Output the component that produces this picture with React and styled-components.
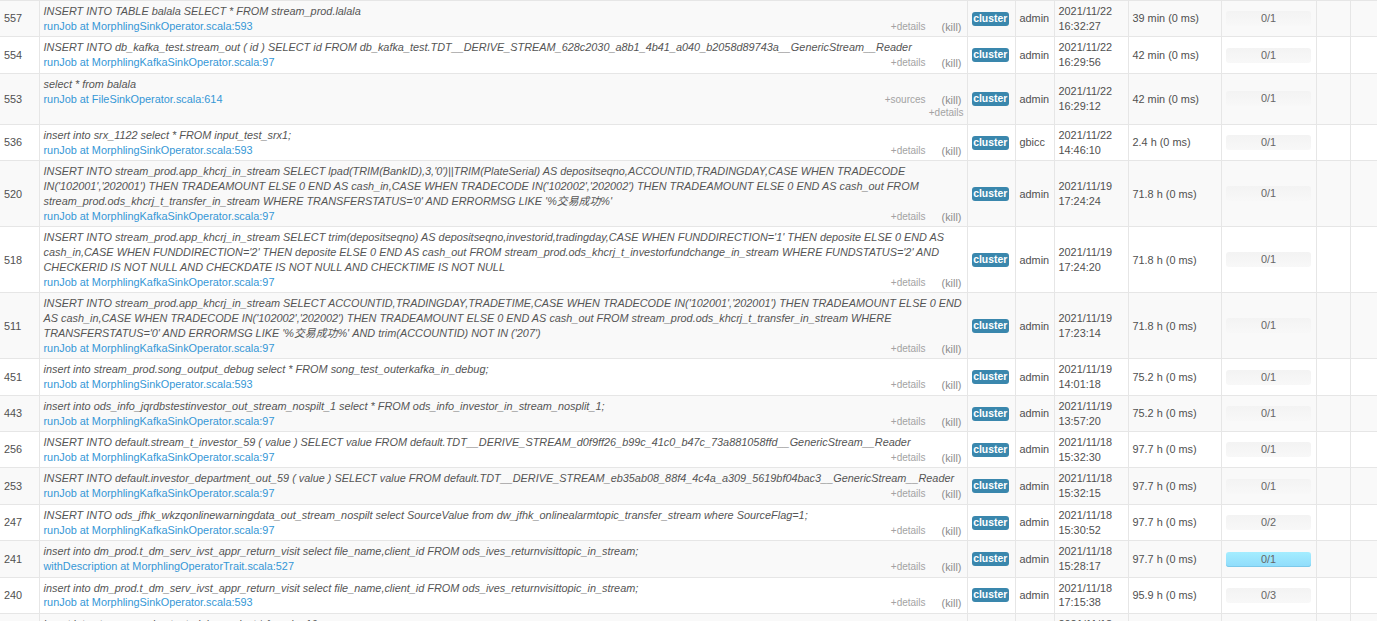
import styled, { createGlobalStyle } from "styled-components";

const GlobalStyle = createGlobalStyle`
	html, body {
		height: 100%;
		margin: 0;
		overflow: hidden;
		background-color: #fff;
	}
	body {
		font-family: "Liberation Sans", "Noto Sans CJK SC", sans-serif;
		font-size: 10.88px;
		line-height: 14.8px;
		color: #505050;
	}
`;

const Table = styled.table`
	width: 1377px;
	table-layout: fixed;
	border-collapse: collapse;
`;

const Row = styled.tr`
	background-color: ${(props) => (props.$striped ? "#f9f9f9" : "#fff")};
`;

const Cell = styled.td`
	padding: 3px 4px 2.8px;
	border-top: 1px solid #e6e6e6;
	border-left: 1px solid #e6e6e6;
	vertical-align: middle;
	&:first-child {
		border-left: none;
	}
`;

const DescCell = styled(Cell)`
	vertical-align: top;
`;

const Query = styled.div`
	font-style: italic;
	color: #555;
`;

const Foot = styled.div`
	display: flex;
	align-items: baseline;
	height: 14.8px;
`;

const JobLink = styled.a`
	color: #3597d6;
	text-decoration: none;
`;

const Expand = styled.span`
	margin-left: auto;
	margin-right: 16px;
	font-size: 10px;
	color: #a3a3a3;
`;

const Kill = styled.span`
	color: #8d8d8d;
	position: relative;
	top: 1px;
	margin-right: 1px;
`;

const ExtraLine = styled.div`
	text-align: right;
	font-size: 10px;
	color: #a3a3a3;
	margin-right: -1px;
`;

const Badge = styled.span`
	display: block;
	width: 36.5px;
	height: 14px;
	margin-left: 0.5px;
	line-height: 14px;
	text-align: center;
	border-radius: 3px;
	background-color: #3a87ad;
	color: #fff;
	font-size: 10.4px;
	font-weight: 700;
`;

const Stamp = styled.span`
	display: block;
	width: 60px;
`;

const Progress = styled.div`
	height: 15px;
	line-height: 15px;
	margin: 0 0.5px;
	text-align: center;
	border-radius: 3px;
	color: #666;
	background: ${(props) =>
		props.$active
			? "linear-gradient(to bottom, #a4edff, #8fdcfb)"
			: "linear-gradient(to bottom, #f3f3f3, #f8f8f8)"};
	box-shadow: ${(props) => (props.$active ? "inset 0 -1px 0 #7cc9ea" : "none")};
`;

const columns = [39, 928, 48, 39, 74, 93, 95, 34, 27];

const sink593 = "runJob at MorphlingSinkOperator.scala:593";
const kafka97 = "runJob at MorphlingKafkaSinkOperator.scala:97";

const jobs = [
	{ id: 557, query: "INSERT INTO TABLE balala SELECT * FROM stream_prod.lalala", link: sink593, user: "admin", date: "2021/11/22", time: "16:32:27", duration: "39 min (0 ms)", tasks: "0/1" },
	{ id: 554, query: "INSERT INTO db_kafka_test.stream_out ( id ) SELECT id FROM db_kafka_test.TDT__DERIVE_STREAM_628c2030_a8b1_4b41_a040_b2058d89743a__GenericStream__Reader", link: kafka97, user: "admin", date: "2021/11/22", time: "16:29:56", duration: "42 min (0 ms)", tasks: "0/1" },
	{ id: 553, query: "select * from balala", link: "runJob at FileSinkOperator.scala:614", user: "admin", date: "2021/11/22", time: "16:29:12", duration: "42 min (0 ms)", tasks: "0/1", sources: true },
	{ id: 536, query: "insert into srx_1122 select * FROM input_test_srx1;", link: sink593, user: "gbicc", date: "2021/11/22", time: "14:46:10", duration: "2.4 h (0 ms)", tasks: "0/1" },
	{ id: 520, query: "INSERT INTO stream_prod.app_khcrj_in_stream SELECT lpad(TRIM(BankID),3,'0')||TRIM(PlateSerial) AS depositseqno,ACCOUNTID,TRADINGDAY,CASE WHEN TRADECODE IN('102001','202001') THEN TRADEAMOUNT ELSE 0 END AS cash_in,CASE WHEN TRADECODE IN('102002','202002') THEN TRADEAMOUNT ELSE 0 END AS cash_out FROM stream_prod.ods_khcrj_t_transfer_in_stream WHERE TRANSFERSTATUS='0' AND ERRORMSG LIKE '%交易成功%'", link: kafka97, user: "admin", date: "2021/11/19", time: "17:24:24", duration: "71.8 h (0 ms)", tasks: "0/1" },
	{ id: 518, query: "INSERT INTO stream_prod.app_khcrj_in_stream SELECT trim(depositseqno) AS depositseqno,investorid,tradingday,CASE WHEN FUNDDIRECTION='1' THEN deposite ELSE 0 END AS cash_in,CASE WHEN FUNDDIRECTION='2' THEN deposite ELSE 0 END AS cash_out FROM stream_prod.ods_khcrj_t_investorfundchange_in_stream WHERE FUNDSTATUS='2' AND CHECKERID IS NOT NULL AND CHECKDATE IS NOT NULL AND CHECKTIME IS NOT NULL", link: kafka97, user: "admin", date: "2021/11/19", time: "17:24:20", duration: "71.8 h (0 ms)", tasks: "0/1" },
	{ id: 511, query: "INSERT INTO stream_prod.app_khcrj_in_stream SELECT ACCOUNTID,TRADINGDAY,TRADETIME,CASE WHEN TRADECODE IN('102001','202001') THEN TRADEAMOUNT ELSE 0 END AS cash_in,CASE WHEN TRADECODE IN('102002','202002') THEN TRADEAMOUNT ELSE 0 END AS cash_out FROM stream_prod.ods_khcrj_t_transfer_in_stream WHERE TRANSFERSTATUS='0' AND ERRORMSG LIKE '%交易成功%' AND trim(ACCOUNTID) NOT IN ('207')", link: kafka97, user: "admin", date: "2021/11/19", time: "17:23:14", duration: "71.8 h (0 ms)", tasks: "0/1" },
	{ id: 451, query: "insert into stream_prod.song_output_debug select * FROM song_test_outerkafka_in_debug;", link: sink593, user: "admin", date: "2021/11/19", time: "14:01:18", duration: "75.2 h (0 ms)", tasks: "0/1" },
	{ id: 443, query: "insert into ods_info_jqrdbstestinvestor_out_stream_nospilt_1 select * FROM ods_info_investor_in_stream_nosplit_1;", link: kafka97, user: "admin", date: "2021/11/19", time: "13:57:20", duration: "75.2 h (0 ms)", tasks: "0/1" },
	{ id: 256, query: "INSERT INTO default.stream_t_investor_59 ( value ) SELECT value FROM default.TDT__DERIVE_STREAM_d0f9ff26_b99c_41c0_b47c_73a881058ffd__GenericStream__Reader", link: kafka97, user: "admin", date: "2021/11/18", time: "15:32:30", duration: "97.7 h (0 ms)", tasks: "0/1" },
	{ id: 253, query: "INSERT INTO default.investor_department_out_59 ( value ) SELECT value FROM default.TDT__DERIVE_STREAM_eb35ab08_88f4_4c4a_a309_5619bf04bac3__GenericStream__Reader", link: kafka97, user: "admin", date: "2021/11/18", time: "15:32:15", duration: "97.7 h (0 ms)", tasks: "0/1" },
	{ id: 247, query: "INSERT INTO ods_jfhk_wkzqonlinewarningdata_out_stream_nospilt select SourceValue from dw_jfhk_onlinealarmtopic_transfer_stream where SourceFlag=1;", link: kafka97, user: "admin", date: "2021/11/18", time: "15:30:52", duration: "97.7 h (0 ms)", tasks: "0/2" },
	{ id: 241, query: "insert into dm_prod.t_dm_serv_ivst_appr_return_visit select file_name,client_id FROM ods_ives_returnvisittopic_in_stream;", link: "withDescription at MorphlingOperatorTrait.scala:527", user: "admin", date: "2021/11/18", time: "15:28:17", duration: "97.7 h (0 ms)", tasks: "0/1", active: true },
	{ id: 240, query: "insert into dm_prod.t_dm_serv_ivst_appr_return_visit select file_name,client_id FROM ods_ives_returnvisittopic_in_stream;", link: sink593, user: "admin", date: "2021/11/18", time: "17:15:38", duration: "95.9 h (0 ms)", tasks: "0/3" },
	{ id: 238, query: "insert into stream_prod.output_debug select * from in_10;", link: sink593, user: "admin", date: "2021/11/18", time: "17:10:02", duration: "95.9 h (0 ms)", tasks: "0/1" },
];

const JobRow = ({ job, striped }) => (
	<Row $striped={striped}>
		<Cell>{job.id}</Cell>
		<DescCell>
			<Query>{job.query}</Query>
			<Foot>
				<JobLink href="#">{job.link}</JobLink>
				<Expand>{job.sources ? "+sources" : "+details"}</Expand>
				<Kill>(kill)</Kill>
			</Foot>
			{job.sources && <ExtraLine>+details</ExtraLine>}
		</DescCell>
		<Cell>
			<Badge>cluster</Badge>
		</Cell>
		<Cell>{job.user}</Cell>
		<Cell>
			<Stamp>
				{job.date} {job.time}
			</Stamp>
		</Cell>
		<Cell>{job.duration}</Cell>
		<Cell>
			<Progress $active={job.active}>{job.tasks}</Progress>
		</Cell>
		<Cell />
		<Cell />
	</Row>
);

const App = () => (
	<>
		<GlobalStyle />
		<Table>
			<colgroup>
				{columns.map((width, index) => (
					<col key={index} width={width} />
				))}
			</colgroup>
			<tbody>
				{jobs.map((job, index) => (
					<JobRow key={job.id} job={job} striped={index % 2 === 0} />
				))}
			</tbody>
		</Table>
	</>
);

export default App;
